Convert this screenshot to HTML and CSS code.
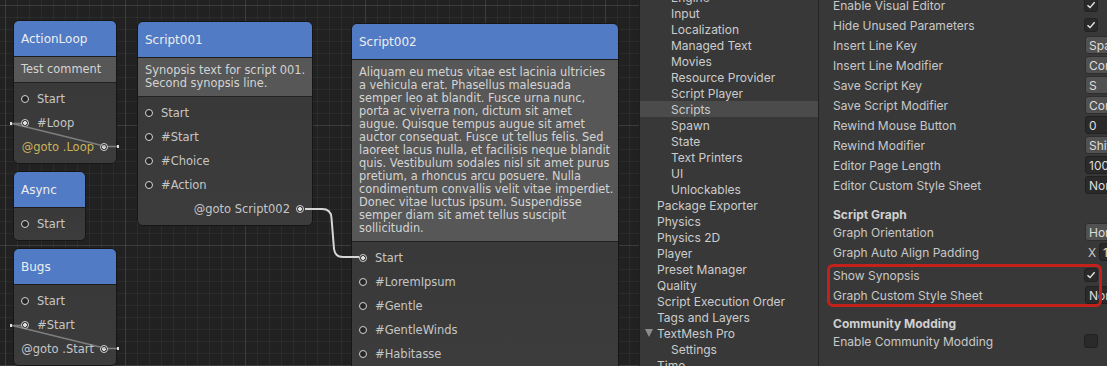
FILE: index.html
```html
<!DOCTYPE html>
<html>
<head>
<meta charset="utf-8">
<link rel="stylesheet" href="styles.css">
</head>
<body>
<div class="graph">
  <div class="node n-actionloop">
    <div class="node-title">ActionLoop</div>
    <div class="node-synopsis">Test comment</div>
    <div class="node-ports">
      <div class="port"><span class="dot"></span>Start</div>
      <div class="port"><span class="dot linked"></span>#Loop</div>
      <div class="port out goto-label"><span>@goto .Loop</span><span class="dot linked"></span></div>
    </div>
  </div>

  <div class="node n-async">
    <div class="node-title">Async</div>
    <div class="node-ports">
      <div class="port"><span class="dot"></span>Start</div>
    </div>
  </div>

  <div class="node n-bugs">
    <div class="node-title">Bugs</div>
    <div class="node-ports">
      <div class="port"><span class="dot"></span>Start</div>
      <div class="port"><span class="dot linked"></span>#Start</div>
      <div class="port out"><span>@goto .Start</span><span class="dot linked"></span></div>
    </div>
  </div>

  <div class="node n-script001">
    <div class="node-title">Script001</div>
    <div class="node-synopsis">Synopsis text for script 001.<br>Second synopsis line.</div>
    <div class="node-ports">
      <div class="port"><span class="dot"></span>Start</div>
      <div class="port"><span class="dot"></span>#Start</div>
      <div class="port"><span class="dot"></span>#Choice</div>
      <div class="port"><span class="dot"></span>#Action</div>
      <div class="port out"><span>@goto Script002</span><span class="dot linked"></span></div>
    </div>
  </div>

  <div class="node n-script002">
    <div class="node-title">Script002</div>
    <div class="node-synopsis">Aliquam eu metus vitae est lacinia ultricies<br>a vehicula erat. Phasellus malesuada<br>semper leo at blandit. Fusce urna nunc,<br>porta ac viverra non, dictum sit amet<br>augue. Quisque tempus augue sit amet<br>auctor consequat. Fusce ut tellus felis. Sed<br>laoreet lacus nulla, et facilisis neque blandit<br>quis. Vestibulum sodales nisl sit amet purus<br>pretium, a rhoncus arcu posuere. Nulla<br>condimentum convallis velit vitae imperdiet.<br>Donec vitae luctus ipsum. Suspendisse<br>semper diam sit amet tellus suscipit<br>sollicitudin.</div>
    <div class="node-ports">
      <div class="port"><span class="dot linked"></span>Start</div>
      <div class="port"><span class="dot"></span>#LoremIpsum</div>
      <div class="port"><span class="dot"></span>#Gentle</div>
      <div class="port"><span class="dot"></span>#GentleWinds</div>
      <div class="port"><span class="dot"></span>#Habitasse</div>
    </div>
  </div>

  <svg class="edges" width="639" height="366" viewBox="0 0 639 366">
    <g fill="none" stroke="rgba(150,150,150,0.75)" stroke-width="1.5">
      <path d="M12 123.5 H21 M12 123.5 L106 146.5 M108 146.5 H117"/>
      <path d="M12 325.5 H21 M12 325.5 L106 348.5 M108 348.5 H117"/>
    </g>
    <g fill="#e0e0e0">
      <rect x="10" y="122" width="2" height="3"/>
      <rect x="117" y="145" width="2" height="3"/>
      <rect x="10" y="324" width="2" height="3"/>
      <rect x="117" y="347" width="2" height="3"/>
    </g>
    <path d="M305 209 H322 Q331 209 331.5 218 L334 249 Q335 257 343 257 H359" fill="none" stroke="#d6d6d6" stroke-width="2"/>
  </svg>
</div>

<nav class="tree">
  <div class="tree-item sub">Engine</div>
  <div class="tree-item sub">Input</div>
  <div class="tree-item sub">Localization</div>
  <div class="tree-item sub">Managed Text</div>
  <div class="tree-item sub">Movies</div>
  <div class="tree-item sub">Resource Provider</div>
  <div class="tree-item sub">Script Player</div>
  <div class="tree-item sub selected">Scripts</div>
  <div class="tree-item sub">Spawn</div>
  <div class="tree-item sub">State</div>
  <div class="tree-item sub">Text Printers</div>
  <div class="tree-item sub">UI</div>
  <div class="tree-item sub">Unlockables</div>
  <div class="tree-item top">Package Exporter</div>
  <div class="tree-item top">Physics</div>
  <div class="tree-item top">Physics 2D</div>
  <div class="tree-item top">Player</div>
  <div class="tree-item top">Preset Manager</div>
  <div class="tree-item top">Quality</div>
  <div class="tree-item top">Script Execution Order</div>
  <div class="tree-item top">Tags and Layers</div>
  <div class="tree-item arrowed"><span class="arrow"></span>TextMesh Pro</div>
  <div class="tree-item sub">Settings</div>
  <div class="tree-item top">Time</div>
</nav>

<section class="inspector">
  <div class="props">
    <div class="row"><span class="label">Enable Visual Editor</span><span class="check"><svg width="10" height="10" viewBox="0 0 10 10"><path d="M1.5 5.2 L4 7.6 L8.6 2.2" fill="none" stroke="#e8e8e8" stroke-width="1.4"/></svg></span></div>
    <div class="row"><span class="label">Hide Unused Parameters</span><span class="check"><svg width="10" height="10" viewBox="0 0 10 10"><path d="M1.5 5.2 L4 7.6 L8.6 2.2" fill="none" stroke="#e8e8e8" stroke-width="1.4"/></svg></span></div>
    <div class="row"><span class="label">Insert Line Key</span><span class="popup">Space</span></div>
    <div class="row"><span class="label">Insert Line Modifier</span><span class="popup">Control</span></div>
    <div class="row"><span class="label">Save Script Key</span><span class="popup">S</span></div>
    <div class="row"><span class="label">Save Script Modifier</span><span class="popup">Control</span></div>
    <div class="row"><span class="label">Rewind Mouse Button</span><span class="field">0</span></div>
    <div class="row"><span class="label">Rewind Modifier</span><span class="popup">Shift</span></div>
    <div class="row"><span class="label">Editor Page Length</span><span class="field">1000</span></div>
    <div class="row"><span class="label">Editor Custom Style Sheet</span><span class="field">None (Style Sheet)</span></div>

    <div class="section">Script Graph</div>
    <div class="row"><span class="label">Graph Orientation</span><span class="popup">Horizontal</span></div>
    <div class="row row-vec"><span class="label">Graph Auto Align Padding</span><span class="vec"><span class="vx">X</span><span class="field">10</span></span></div>
    <div class="row"><span class="label">Show Synopsis</span><span class="check"><svg width="10" height="10" viewBox="0 0 10 10"><path d="M1.5 5.2 L4 7.6 L8.6 2.2" fill="none" stroke="#e8e8e8" stroke-width="1.4"/></svg></span></div>
    <div class="row"><span class="label">Graph Custom Style Sheet</span><span class="field">None (Style Sheet)</span></div>

    <div class="section section-2">Community Modding</div>
    <div class="row"><span class="label">Enable Community Modding</span><span class="check"></span></div>
  </div>
  <div class="highlight"></div>
</section>
</body>
</html>
```
FILE: styles.css
```css
* { box-sizing: border-box; }
html, body { margin: 0; padding: 0; }
body {
  width: 1107px;
  height: 366px;
  overflow: hidden;
  display: flex;
  background: #383838;
  font-family: Inter, "Noto Sans", sans-serif;
}

/* ---------- graph ---------- */
.graph {
  position: relative;
  flex: none;
  width: 639px;
  height: 366px;
  overflow: hidden;
  background-color: #212121;
  background-image:
    linear-gradient(to bottom, rgba(255,255,255,0.075) 1px, transparent 1px),
    linear-gradient(to right, rgba(255,255,255,0.075) 1px, transparent 1px),
    linear-gradient(to bottom, rgba(255,255,255,0.045) 1px, transparent 1px),
    linear-gradient(to right, rgba(255,255,255,0.045) 1px, transparent 1px);
  background-size: 120px 120px, 120px 120px, 12px 12px, 12px 12px;
  background-position: 5px 5px, 5px 5px, 5px 5px, 5px 5px;
}
.node {
  position: absolute;
  display: flex;
  flex-direction: column;
  border: 1px solid #161616;
  border-radius: 6px;
  overflow: hidden;
  background: #3a3a3a;
  font-family: "DejaVu Sans", sans-serif;
}
.n-actionloop { left: 13px; top: 20px; width: 104px; }
.n-async { left: 13px; top: 171px; width: 73px; }
.n-bugs { left: 13px; top: 248px; width: 104px; }
.n-script001 { left: 137px; top: 21px; width: 176px; }
.n-script002 { left: 351px; top: 23px; width: 268px; }

.node-title {
  height: 36px;
  flex: none;
  display: flex;
  align-items: center;
  padding-left: 7px;
  background: #517bc5;
  border-bottom: 1px solid #1c1c1c;
  color: #ededed;
  font-size: 12px;
}
.node-synopsis {
  padding: 6px 7px;
  background: #575757;
  border-bottom: 1px solid #222;
  color: #d4d4d4;
  font-size: 11.4px;
  line-height: 13px;
  white-space: nowrap;
}
.node-ports {
  display: flex;
  flex-direction: column;
  padding: 4px 0;
  background: linear-gradient(#393939, #3c3c3c);
}
.port {
  height: 24px;
  display: flex;
  align-items: center;
  gap: 8px;
  padding: 0 7px;
  color: #c6c6c6;
  font-size: 11.5px;
  white-space: nowrap;
}
.port.out { justify-content: flex-end; gap: 6px; padding-right: 8px; }
.goto-label span:first-child { color: #c9b45c; }
.dot {
  flex: none;
  width: 8px;
  height: 8px;
  border: 1.5px solid #d4d4d4;
  border-radius: 50%;
  background: #262626;
}
.dot.linked {
  background: radial-gradient(circle, #dcdcdc 0 1.6px, #262626 2.2px);
}
.edges { position: absolute; left: 0; top: 0; }

/* ---------- tree ---------- */
.tree {
  flex: none;
  width: 180px;
  height: 366px;
  border-left: 1px solid #1f1f1f;
  border-right: 1px solid #232323;
  background: #383838;
  overflow: hidden;
}
.tree-item {
  height: 16px;
  display: flex;
  align-items: center;
  color: #cccccc;
  font-size: 12px;
  white-space: nowrap;
}
.tree-item:first-child { margin-top: -11px; }
.tree-item.sub { padding-left: 31px; }
.tree-item.top { padding-left: 17px; }
.tree-item.arrowed { padding-left: 5px; }
.tree-item.selected { background: #4b4b4b; }
.arrow {
  width: 0;
  height: 0;
  margin-right: 4px;
  border-left: 4.5px solid transparent;
  border-right: 4.5px solid transparent;
  border-top: 8px solid #8c8c8c;
}

/* ---------- inspector ---------- */
.inspector {
  position: relative;
  flex: 1;
  height: 366px;
  padding-left: 14px;
  overflow: hidden;
  color: #c8c8c8;
  font-size: 12px;
}
.props { margin-top: -4px; display: flex; flex-direction: column; }
.row {
  height: 18px;
  margin-bottom: 2px;
  display: flex;
  align-items: center;
  white-space: nowrap;
}
.row-vec { margin-bottom: 5px; }
.label { flex: none; width: 251px; }
.check {
  flex: none;
  width: 14px;
  height: 14px;
  display: flex;
  align-items: center;
  justify-content: center;
  background: #2a2a2a;
  border: 1px solid #212121;
  border-radius: 3px;
}
.popup, .field {
  flex: none;
  width: 120px;
  height: 18px;
  margin-left: 1px;
  padding-left: 3px;
  display: flex;
  align-items: center;
  border-radius: 3px;
  color: #dedede;
}
.popup { background: #515151; border: 1px solid #2e2e2e; }
.field { background: #2a2a2a; border: 1px solid #212121; }
.vec { display: flex; align-items: center; padding-left: 4px; }
.vx { width: 8px; margin-right: 3px; }
.vec .field { margin-left: 0; }
.section {
  height: 17px;
  margin-top: 10px;
  display: flex;
  align-items: center;
  font-weight: 700;
  color: #d0d0d0;
}
.section-2 { margin-top: 9px; }
.highlight {
  position: absolute;
  left: 8px;
  top: 264px;
  width: 275px;
  height: 43px;
  border: 3px solid #c4201c;
  border-radius: 6px;
}
```
